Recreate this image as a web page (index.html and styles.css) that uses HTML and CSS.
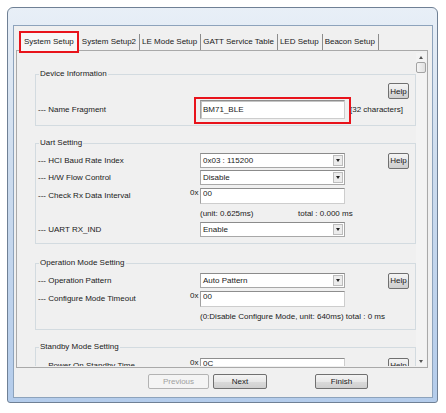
FILE: index.html
```html
<!DOCTYPE html>
<html lang="en">
<head>
    <meta charset="UTF-8">
    <meta name="viewport" content="width=device-width, initial-scale=1.0">
    <title>BM71 UI Config</title>
    <link rel="stylesheet" href="styles.css">
</head>
<body>
    <div class="window">
        <div class="client">
            <div class="tabctl">
                <div class="tabs">
                    <span class="tab active">System Setup</span>
                    <span class="tab">System Setup2</span>
                    <span class="tab">LE Mode Setup</span>
                    <span class="tab">GATT Service Table</span>
                    <span class="tab">LED Setup</span>
                    <span class="tab">Beacon Setup</span>
                </div>
                <div class="panel">
                    <div class="view">
                        <div class="content">
                            <fieldset class="group g-device">
                                <legend>Device Information</legend>
                                <div class="row right">
                                    <button class="help">Help</button>
                                </div>
                                <div class="row tall name-row">
                                    <span class="label">--- Name Fragment</span>
                                    <span class="prefix"></span>
                                    <span class="mark"><input class="edit name" type="text" value="BM71_BLE"></span>
                                    <span class="note">[32 characters]</span>
                                </div>
                            </fieldset>

                            <fieldset class="group g-uart">
                                <legend>Uart Setting</legend>
                                <div class="row">
                                    <span class="label">--- HCI Baud Rate Index</span>
                                    <span class="prefix"></span>
                                    <div class="combo"><span class="val">0x03 : 115200</span><span class="drop"></span></div>
                                    <button class="help">Help</button>
                                </div>
                                <div class="row">
                                    <span class="label">--- H/W Flow Control</span>
                                    <span class="prefix"></span>
                                    <div class="combo"><span class="val">Disable</span><span class="drop"></span></div>
                                </div>
                                <div class="row tall">
                                    <span class="label">--- Check Rx Data Interval</span>
                                    <span class="prefix">0x</span>
                                    <input class="edit" type="text" value="00">
                                </div>
                                <div class="row info">
                                    <span class="label"></span>
                                    <span class="prefix"></span>
                                    <span class="unit">(unit: 0.625ms)</span>
                                    <span>total : 0.000 ms</span>
                                </div>
                                <div class="row">
                                    <span class="label">--- UART RX_IND</span>
                                    <span class="prefix"></span>
                                    <div class="combo"><span class="val">Enable</span><span class="drop"></span></div>
                                </div>
                            </fieldset>

                            <fieldset class="group g-op">
                                <legend>Operation Mode Setting</legend>
                                <div class="row">
                                    <span class="label">--- Operation Pattern</span>
                                    <span class="prefix"></span>
                                    <div class="combo"><span class="val">Auto Pattern</span><span class="drop"></span></div>
                                    <button class="help">Help</button>
                                </div>
                                <div class="row tall">
                                    <span class="label">--- Configure Mode Timeout</span>
                                    <span class="prefix">0x</span>
                                    <input class="edit" type="text" value="00">
                                </div>
                                <div class="row">
                                    <span class="label"></span>
                                    <span class="prefix"></span>
                                    <span>(0:Disable Configure Mode, unit: 640ms) total : 0 ms</span>
                                </div>
                            </fieldset>

                            <fieldset class="group g-standby">
                                <legend>Standby Mode Setting</legend>
                                <div class="row tall">
                                    <span class="label">--- Power On Standby Time</span>
                                    <span class="prefix">0x</span>
                                    <input class="edit" type="text" value="0C">
                                    <button class="help">Help</button>
                                </div>
                            </fieldset>
                        </div>
                        <div class="vscroll">
                            <span class="sb-btn up"></span>
                            <span class="thumb"></span>
                            <span class="track"></span>
                            <span class="sb-btn down"></span>
                        </div>
                    </div>
                </div>
            </div>

            <div class="buttons">
                <button class="btn prev" disabled>Previous</button>
                <button class="btn next">Next</button>
                <button class="btn finish">Finish</button>
            </div>
        </div>
    </div>
</body>
</html>
```

FILE: styles.css
```css
body {
    margin: 0;
    padding: 0;
    background-color: #fff;
    font-family: 'Liberation Sans', Arial, sans-serif;
    font-size: 8px;
    color: #1a1a1a;
    overflow: hidden;
}

/* window frame (win7 basic look) */
.window {
    box-sizing: border-box;
    display: flex;
    width: 431px;
    height: 396px;
    margin: 7px 0 0 7px;
    padding: 17px 4px 4px 5px;
    border: 1px solid #6f8095;
    border-radius: 6px 6px 3px 3px;
    background: linear-gradient(to bottom, #e8eff7 0%, #cddcee 40%, #b4cceb 100%);
}
.client {
    flex: 1;
    display: flex;
    flex-direction: column;
    border: 1px solid #8da3bc;
    background-color: #f0f0f0;
}

/* tabs */
.tabctl {
    margin: 5px 4px 0 2px;
}
.tabs {
    display: flex;
    align-items: flex-end;
    height: 19px;
    padding-left: 3px;
}
.tab {
    height: 16px;
    line-height: 16px;
    padding: 0 3px 0 2px;
    border-right: 1px solid #8c8c8c;
    white-space: nowrap;
}
.tab.active {
    box-sizing: border-box;
    position: relative;
    z-index: 1;
    height: 22px;
    line-height: 18px;
    margin: 0 1px -3px 0;
    padding: 0 3px;
    border: 2px solid #e8131b; /* red marker */
    background-color: #f7f7f7;
}
.panel {
    box-sizing: border-box;
    height: 318px;
    padding: 2px 1px 1px 3px;
    border: 1px solid #a9a9a9;
    background-color: #f0f0f0;
}
.view {
    display: flex;
    height: 100%;
}
.content {
    flex: 1;
    overflow: hidden;
    padding-top: 16px;
}

/* group boxes */
.group {
    margin: 0 0 12px 15px;
    padding: 4px 6px 5px 2px;
    border: 1px solid #d3dbe0;
    min-width: 0;
}
.group legend {
    margin-left: 1px;
    padding: 0 1px;
    line-height: 10px;
}
.g-device {
    padding-bottom: 6px;
}
.g-uart {
    margin-bottom: 14px;
}
.g-op {
    padding-bottom: 4px;
}

.row {
    display: flex;
    align-items: center;
    height: 17px;
    white-space: nowrap;
}
.row.tall {
    height: 19px;
}
.row.info {
    height: 16px;
}
.row.right {
    justify-content: flex-end;
    height: 16px;
}
.name-row {
    margin-top: 1px;
}
.label {
    flex: none;
    width: 152px;
}
.prefix {
    flex: none;
    align-self: flex-start;
    width: 10px;
    padding-top: 2px;
    line-height: 10px;
}
.unit {
    width: 98px;
}
.note {
    margin-left: 5px;
}

/* fields */
.combo {
    box-sizing: border-box;
    display: flex;
    align-items: center;
    width: 145px;
    height: 15px;
    border: 1px solid #a8a8a8;
    border-top-color: #8b8b8b;
    background-color: #fff;
}
.combo .val {
    flex: 1;
    padding-left: 2px;
}
.drop {
    box-sizing: border-box;
    display: flex;
    align-items: center;
    justify-content: center;
    width: 10px;
    height: 11px;
    margin-right: 1px;
    border: 1px solid #bdbdbd;
    background-color: #ececec;
}
.drop::before {
    content: '';
    border-top: 3px solid #222;
    border-left: 2px solid transparent;
    border-right: 2px solid transparent;
}
.edit {
    box-sizing: border-box;
    width: 145px;
    height: 16px;
    margin: 0;
    padding: 0 0 5px 2px; /* text sits at the top like the original */
    font: inherit;
    color: inherit;
    border: 1px solid #cdcdcd;
    border-top-color: #8e8e8e;
    border-left-color: #a0a0a0;
    background-color: #fff;
    outline: none;
}
.edit.name {
    height: 19px;
    padding: 0 0 0 2px;
    box-shadow: inset 1px 1px 0 #c4c4c4;
}
.mark {
    position: relative;
    display: flex;
}
.mark::after {
    content: '';
    position: absolute;
    top: -3px;
    right: -6px;
    bottom: -5px;
    left: -6px;
    border: 2px solid #e8131b; /* red marker */
    pointer-events: none;
}

.help {
    flex: none;
    width: 21px;
    height: 16px;
    margin-left: auto;
    padding: 0;
    font: inherit;
    color: #1a1a1a;
    border: 1px solid #707070;
    border-radius: 2px;
    background: linear-gradient(to bottom, #f4f4f4 0%, #e8e8e8 50%, #dadada 51%, #cfcfcf 100%);
}

/* scrollbar */
.vscroll {
    flex: none;
    display: flex;
    flex-direction: column;
    width: 10px;
    background-color: #f3f3f3;
}
.sb-btn {
    display: flex;
    align-items: center;
    justify-content: center;
    height: 9px;
}
.sb-btn.up::before {
    content: '';
    border-bottom: 3px solid #555;
    border-left: 2px solid transparent;
    border-right: 2px solid transparent;
}
.sb-btn.down::before {
    content: '';
    border-top: 3px solid #555;
    border-left: 2px solid transparent;
    border-right: 2px solid transparent;
}
.thumb {
    box-sizing: border-box;
    height: 11px;
    border: 1px solid #a3a3a3;
    border-radius: 2px;
    background: linear-gradient(to right, #f5f5f5, #e0e0e0);
}
.track {
    flex: 1;
}

/* bottom buttons */
.buttons {
    display: flex;
    padding: 6px 0 0 134px;
}
.btn {
    box-sizing: border-box;
    height: 15px;
    padding: 0;
    font: inherit;
    color: #1a1a1a;
    border: 1px solid #707070;
    border-radius: 2px;
    background: linear-gradient(to bottom, #f4f4f4 0%, #e8e8e8 50%, #dadada 51%, #cfcfcf 100%);
}
.btn.prev {
    width: 61px;
    color: #a0a0a0;
    border-color: #b3b3b3;
    background: #f4f4f4;
}
.btn.next {
    width: 54px;
    margin-left: 4px;
}
.btn.finish {
    width: 53px;
    margin-left: 48px;
}
```
